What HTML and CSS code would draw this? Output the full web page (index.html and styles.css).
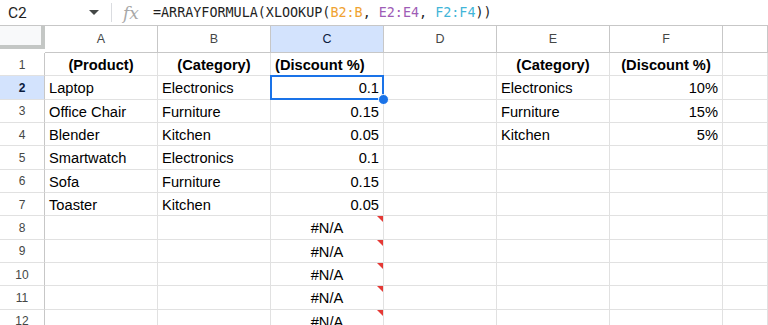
FILE: index.html
```html
<html>
<head>
	<title>Sheet</title>
	<link rel="stylesheet" href="styles.css">
</head>
<body>
	<div class="formula-bar">
		<div class="name-box">
			<span class="cell-ref">C2</span>
			<span class="caret"></span>
		</div>
		<div class="divider"></div>
		<span class="fx">fx</span>
		<div class="formula">=ARRAYFORMULA(XLOOKUP(<span class="ref-orange">B2:B</span>, <span class="ref-purple">E2:E4</span>, <span class="ref-teal">F2:F4</span>))</div>
	</div>
	<div class="sheet">
		<!-- column headers -->
		<div class="corner"></div>
		<div class="col-head">A</div>
		<div class="col-head">B</div>
		<div class="col-head current">C</div>
		<div class="col-head">D</div>
		<div class="col-head">E</div>
		<div class="col-head">F</div>
		<div class="col-head"></div>

		<div class="row-head">1</div>
		<div class="cell title">(Product)</div>
		<div class="cell title">(Category)</div>
		<div class="cell title left">(Discount %)</div>
		<div class="cell"></div>
		<div class="cell title">(Category)</div>
		<div class="cell title">(Discount %)</div>
		<div class="cell"></div>

		<div class="row-head current">2</div>
		<div class="cell">Laptop</div>
		<div class="cell">Electronics</div>
		<div class="cell num active">0.1<span class="handle"></span></div>
		<div class="cell"></div>
		<div class="cell">Electronics</div>
		<div class="cell num">10%</div>
		<div class="cell"></div>

		<div class="row-head">3</div>
		<div class="cell">Office Chair</div>
		<div class="cell">Furniture</div>
		<div class="cell num">0.15</div>
		<div class="cell"></div>
		<div class="cell">Furniture</div>
		<div class="cell num">15%</div>
		<div class="cell"></div>

		<div class="row-head">4</div>
		<div class="cell">Blender</div>
		<div class="cell">Kitchen</div>
		<div class="cell num">0.05</div>
		<div class="cell"></div>
		<div class="cell">Kitchen</div>
		<div class="cell num">5%</div>
		<div class="cell"></div>

		<div class="row-head">5</div>
		<div class="cell">Smartwatch</div>
		<div class="cell">Electronics</div>
		<div class="cell num">0.1</div>
		<div class="cell"></div>
		<div class="cell"></div>
		<div class="cell"></div>
		<div class="cell"></div>

		<div class="row-head">6</div>
		<div class="cell">Sofa</div>
		<div class="cell">Furniture</div>
		<div class="cell num">0.15</div>
		<div class="cell"></div>
		<div class="cell"></div>
		<div class="cell"></div>
		<div class="cell"></div>

		<div class="row-head">7</div>
		<div class="cell">Toaster</div>
		<div class="cell">Kitchen</div>
		<div class="cell num">0.05</div>
		<div class="cell"></div>
		<div class="cell"></div>
		<div class="cell"></div>
		<div class="cell"></div>

		<div class="row-head">8</div>
		<div class="cell"></div>
		<div class="cell"></div>
		<div class="cell error">#N/A</div>
		<div class="cell"></div>
		<div class="cell"></div>
		<div class="cell"></div>
		<div class="cell"></div>

		<div class="row-head">9</div>
		<div class="cell"></div>
		<div class="cell"></div>
		<div class="cell error">#N/A</div>
		<div class="cell"></div>
		<div class="cell"></div>
		<div class="cell"></div>
		<div class="cell"></div>

		<div class="row-head">10</div>
		<div class="cell"></div>
		<div class="cell"></div>
		<div class="cell error">#N/A</div>
		<div class="cell"></div>
		<div class="cell"></div>
		<div class="cell"></div>
		<div class="cell"></div>

		<div class="row-head">11</div>
		<div class="cell"></div>
		<div class="cell"></div>
		<div class="cell error">#N/A</div>
		<div class="cell"></div>
		<div class="cell"></div>
		<div class="cell"></div>
		<div class="cell"></div>

		<div class="row-head">12</div>
		<div class="cell"></div>
		<div class="cell"></div>
		<div class="cell error">#N/A</div>
		<div class="cell"></div>
		<div class="cell"></div>
		<div class="cell"></div>
		<div class="cell"></div>
	</div>
</body>
</html>
```

FILE: styles.css
```css
*
{
	box-sizing: border-box;
}
body
{
	margin: 0px;
	background: #FFFFFF;
	font-family: "Liberation Sans", Arial, sans-serif;
	color: #000000;
	overflow: hidden;
}

/* formula bar */
.formula-bar
{
	display: flex;
	align-items: center;
	height: 26px;
	border-bottom: 1px solid #C7C7C7;
}
.name-box
{
	display: flex;
	align-items: center;
	width: 111px;
	padding: 0px 12px 0px 8px;
}
.cell-ref
{
	flex: 1;
	font-family: Roboto, sans-serif;
	font-size: 15.5px;
	color: #1F1F1F;
}
.caret
{
	width: 0px;
	height: 0px;
	border-left: 5px solid transparent;
	border-right: 5px solid transparent;
	border-top: 5px solid #444746;
}
.divider
{
	width: 1px;
	height: 19px;
	background: #DADCE0;
}
.fx
{
	margin: 0px 0px 0px 11px;
	width: 30px;
	font-family: "DejaVu Serif", serif;
	font-style: italic;
	font-size: 17px;
	color: #A8A8A8;
}
.formula
{
	font-family: "DejaVu Sans Mono", monospace;
	font-size: 13.4px;
	color: #1F1F1F;
	white-space: nowrap;
}
.ref-orange
{
	color: #F0A232;
}
.ref-purple
{
	color: #9E5CB6;
}
.ref-teal
{
	color: #41B5D8;
}

/* grid */
.sheet
{
	display: grid;
	grid-template-columns: 45px repeat(6, 113px) 1fr;
	grid-template-rows: 27px;
	grid-auto-rows: 23.333px;
}
.corner
{
	background: #F8F9FA;
	border-right: 4px solid #C4C7C5;
	border-bottom: 4px solid #C4C7C5;
	margin: 0px 0px 4px 0px;
}
.col-head
{
	display: flex;
	align-items: center;
	justify-content: center;
	border-right: 1px solid #C7C7C7;
	border-bottom: 1px solid #C7C7C7;
	font-size: 12.5px;
	color: #444746;
}
.row-head
{
	display: flex;
	align-items: center;
	justify-content: center;
	padding: 1px 0px 0px 0px;
	border-right: 1px solid #C7C7C7;
	border-bottom: 1px solid #E1E1E1;
	font-size: 12px;
	color: #444746;
}
.current
{
	background: #D3E3FD;
	color: #0B1B3D;
}
.row-head.current
{
	font-weight: bold;
}
.cell
{
	position: relative;
	padding: 4px 4px 0px 4px;
	border-right: 1px solid #E1E1E1;
	border-bottom: 1px solid #E1E1E1;
	font-size: 14.67px;
	line-height: 17px;
	white-space: nowrap;
}
.title
{
	font-weight: bold;
	text-align: center;
}
.title.left
{
	text-align: left;
}
.num
{
	text-align: right;
}
.error
{
	text-align: center;
}
.error::after
{
	content: "";
	position: absolute;
	top: 0px;
	right: 0px;
	border-top: 6px solid #E53935;
	border-left: 6px solid transparent;
}
.active::before
{
	content: "";
	position: absolute;
	top: -1px;
	left: -1px;
	right: -1px;
	bottom: -1px;
	border: 2px solid #1A73E8;
}
.handle
{
	position: absolute;
	right: -6px;
	bottom: -6px;
	width: 11px;
	height: 11px;
	border-radius: 50%;
	background: #1A73E8;
	border: 1px solid #FFFFFF;
	z-index: 2;
}
```
